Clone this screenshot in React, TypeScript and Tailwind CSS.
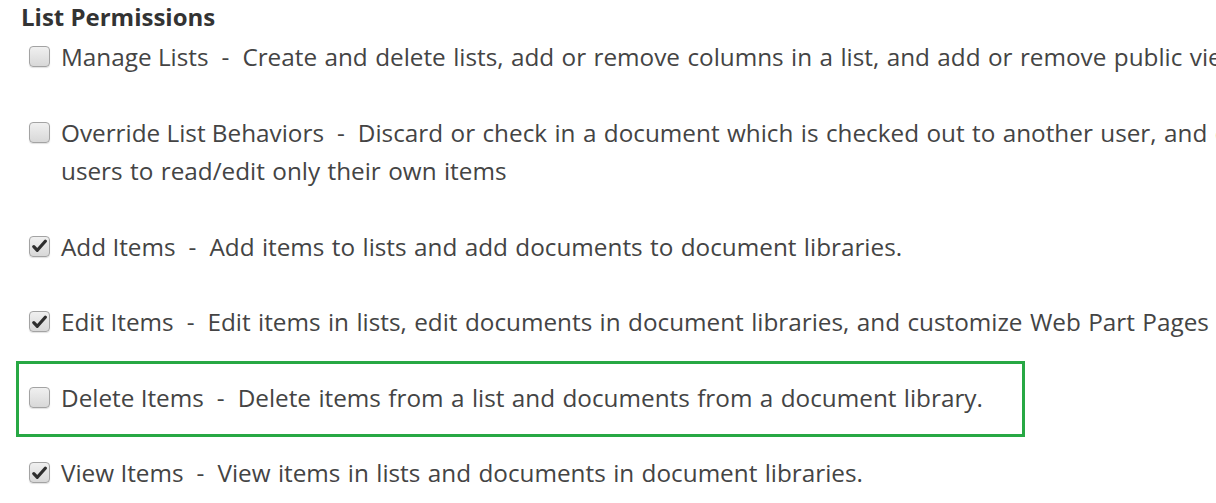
import React from "react";

type Item = { title: string; desc: string[]; checked: boolean; highlight?: boolean };

const items: Item[] = [
  {
    title: "Manage Lists",
    desc: ["Create and delete lists, add or remove columns in a list, and add or remove public views of a list."],
    checked: false,
  },
  {
    title: "Override List Behaviors",
    desc: [
      "Discard or check in a document which is checked out to another user, and change or override settings which allow",
      "users to read/edit only their own items",
    ],
    checked: false,
  },
  { title: "Add Items", desc: ["Add items to lists and add documents to document libraries."], checked: true },
  {
    title: "Edit Items",
    desc: ["Edit items in lists, edit documents in document libraries, and customize Web Part Pages in document libraries."],
    checked: true,
  },
  {
    title: "Delete Items",
    desc: ["Delete items from a list and documents from a document library."],
    checked: false,
    highlight: true,
  },
  { title: "View Items", desc: ["View items in lists and documents in document libraries."], checked: true },
];

function Box({ checked }: { checked: boolean }) {
  return (
    <div className="mt-[8px] h-[21px] w-[21px] shrink-0 rounded-[4px] border-[1.5px] border-[#a3a3a3] bg-gradient-to-b from-[#f0f0f0] to-[#d8d8d8] shadow-[0_1px_1px_rgba(0,0,0,0.12)] flex items-center justify-center">
      {checked && (
        <svg width="15" height="14" viewBox="0 0 15 14">
          <path d="M1.8 7.6 L5.3 11.3 L13.3 2.2" fill="none" stroke="#2e2e2e" strokeWidth="3.2" strokeLinecap="round" strokeLinejoin="round" />
        </svg>
      )}
    </div>
  );
}

export default function App() {
  return (
    <div
      className="w-[1216px] h-[503px] overflow-hidden bg-white text-[#444444]"
      style={{ fontFamily: '"Open Sans", "Noto Sans", Arial, sans-serif' }}
    >
      <div className="pl-[21px] pt-0">
        <div className="text-[24px] leading-[34px] font-bold text-[#333333]">List Permissions</div>
        <div className="mt-[4px] pl-[8px] flex flex-col gap-[37px]">
          {items.map((it) => (
            <div key={it.title} className="relative flex gap-[11px]">
              {it.highlight && (
                <div className="absolute left-[-13px] top-[-18px] w-[1009px] h-[76px] border-[3px] border-[#27a844]" />
              )}
              <Box checked={it.checked} />
              <div className="text-[24.3px] leading-[38.5px] whitespace-nowrap">
                {it.desc.map((d, i) => (
                  <div key={i}>
                    {i === 0 ? (
                      <>
                        {it.title}
                        <span className="mx-[13px]">-</span>
                        <span className="[word-spacing:1.1px]">{d}</span>
                      </>
                    ) : (
                      <span className="[word-spacing:1.1px]">{d}</span>
                    )}
                  </div>
                ))}
              </div>
            </div>
          ))}
        </div>
      </div>
    </div>
  );
}
